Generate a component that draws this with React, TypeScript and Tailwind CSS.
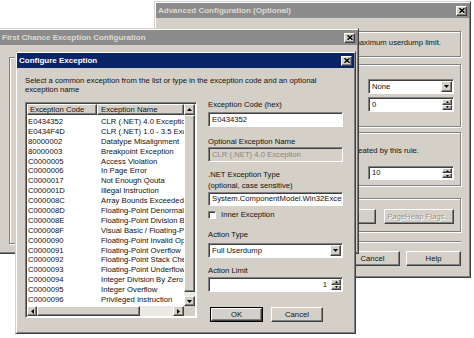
import React from "react";

// classic 3D borders
const frame =
  "border border-t-[#d4d0c8] border-l-[#d4d0c8] border-r-[#404040] border-b-[#404040] p-[1px] shadow-[inset_1px_1px_0_#fff,inset_-1px_-1px_0_#808080]";
const raised =
  "border border-t-white border-l-white border-r-[#404040] border-b-[#404040] shadow-[inset_-1px_-1px_0_#808080]";
const sunken =
  "border border-t-[#808080] border-l-[#808080] border-r-white border-b-white shadow-[inset_1px_1px_0_#404040]";
const etched = "border border-[#808080] shadow-[inset_1px_1px_0_#fff,1px_1px_0_#fff]";

const rows: [string, string][] = [
  ["E0434352", "CLR (.NET) 4.0 Exception"],
  ["E0434F4D", "CLR (.NET) 1.0 - 3.5 Exception"],
  ["80000002", "Datatype Misalignment"],
  ["80000003", "Breakpoint Exception"],
  ["C0000005", "Access Violation"],
  ["C0000006", "In Page Error"],
  ["C0000017", "Not Enough Qouta"],
  ["C000001D", "Illegal Instruction"],
  ["C000008C", "Array Bounds Exceeded"],
  ["C000008D", "Floating-Point Denormal Operand"],
  ["C000008E", "Floating-Point Division By Zero"],
  ["C000008F", "Visual Basic / Floating-Point Inexact Result"],
  ["C0000090", "Floating-Point Invalid Operation"],
  ["C0000091", "Floating-Point Overflow"],
  ["C0000092", "Floating-Point Stack Check"],
  ["C0000093", "Floating-Point Underflow"],
  ["C0000094", "Integer Division By Zero"],
  ["C0000095", "Integer Overflow"],
  ["C0000096", "Privileged Instruction"],
  ["C00000FD", "Stack Overflow"],
];

function XIcon() {
  return (
    <svg width="6" height="5" viewBox="0 0 6 5" className="block">
      <path d="M0.5 0.3 L5.5 4.7 M5.5 0.3 L0.5 4.7" stroke="#000" strokeWidth="1.5" />
    </svg>
  );
}

function Tri({ dir }: { dir: "up" | "down" | "left" | "right" }) {
  const d =
    dir === "up" ? "M0 3 L2.5 0 L5 3 Z" : dir === "down" ? "M0 0 L5 0 L2.5 3 Z" : dir === "left" ? "M3 0 L3 5 L0 2.5 Z" : "M0 0 L0 5 L3 2.5 Z";
  const w = dir === "up" || dir === "down" ? 5 : 3;
  const h = dir === "up" || dir === "down" ? 3 : 5;
  return (
    <svg width={w} height={h} viewBox={`0 0 ${w} ${h}`} className="block">
      <path d={d} fill="#000" />
    </svg>
  );
}

function CloseBtn() {
  return (
    <div className={`flex h-[10px] w-[11px] items-center justify-center bg-[#d4d0c8] ${raised}`}>
      <XIcon />
    </div>
  );
}

function TitleBar({ title, active }: { title: string; active?: boolean }) {
  return (
    <div
      className={`flex h-[15px] shrink-0 items-center justify-between pl-[2px] pr-[2px] ${
        active ? "bg-[#0a246a] text-white" : "bg-[#8c8c8c] text-[#dcd9d2]"
      }`}
    >
      <span className="whitespace-nowrap text-[8px] font-bold leading-none">{title}</span>
      <CloseBtn />
    </div>
  );
}

function Button({ label, isDefault, disabled, className }: { label: string; isDefault?: boolean; disabled?: boolean; className?: string }) {
  return (
    <div className={`${isDefault ? "border border-black" : ""} ${className ?? ""}`}>
      <div
        className={`flex h-full w-full items-center justify-center whitespace-nowrap bg-[#d4d0c8] ${raised} ${
          disabled ? "text-[#9a968e] [text-shadow:1px_1px_0_#fff]" : ""
        }`}
      >
        {label}
      </div>
    </div>
  );
}

function Field({ children, disabled, className }: { children: React.ReactNode; disabled?: boolean; className?: string }) {
  return (
    <div
      className={`flex items-center overflow-hidden whitespace-nowrap p-[1px] pl-[3px] ${sunken} ${
        disabled ? "bg-[#d4d0c8] text-[#8a8780]" : "bg-white"
      } ${className ?? ""}`}
    >
      {children}
    </div>
  );
}

function DropDown({ value, className }: { value: string; className?: string }) {
  return (
    <div className={`flex bg-white p-[1px] ${sunken} ${className ?? ""}`}>
      <span className="flex flex-1 items-center pl-[2px]">{value}</span>
      <div className={`flex w-[11px] items-center justify-center bg-[#d4d0c8] ${raised}`}>
        <Tri dir="down" />
      </div>
    </div>
  );
}

function SpinBox({ value, right, className }: { value: string; right?: boolean; className?: string }) {
  return (
    <div className={`flex bg-white p-[1px] ${sunken} ${className ?? ""}`}>
      <span className={`flex flex-1 items-center pl-[2px] pr-[4px] ${right ? "justify-end" : ""}`}>{value}</span>
      <div className="flex w-[10px] flex-col">
        <div className={`flex flex-1 items-center justify-center bg-[#d4d0c8] ${raised}`}>
          <svg width="3" height="2" viewBox="0 0 3 2" className="block">
            <path d="M0 2 L1.5 0 L3 2 Z" fill="#000" />
          </svg>
        </div>
        <div className={`flex flex-1 items-center justify-center bg-[#d4d0c8] ${raised}`}>
          <svg width="3" height="2" viewBox="0 0 3 2" className="block">
            <path d="M0 0 L3 0 L1.5 2 Z" fill="#000" />
          </svg>
        </div>
      </div>
    </div>
  );
}

function GroupBox({ legend, className, children }: { legend: string; className?: string; children?: React.ReactNode }) {
  return (
    <fieldset className={`${etched} min-w-0 px-[6px] ${className ?? ""}`}>
      <legend className="ml-[5px] px-[2px] leading-[10px]">{legend}</legend>
      {children}
    </fieldset>
  );
}

function AdvancedWindow() {
  return (
    <div className={`absolute left-[154px] top-[1px] flex h-[277px] w-[317px] flex-col bg-[#d4d0c8] ${frame}`}>
      <TitleBar title="Advanced Configuration (Optional)" />
      <div className="flex flex-col pl-[6px] pr-[8px]">
        <GroupBox legend="Exceptions" className="mt-[8px] h-[31px]">
          <div className="flex justify-end overflow-hidden pr-[13px] pt-[2px]">
            <span className="shrink-0 whitespace-nowrap">Userdumps are created for each exception until the maximum userdump limit.</span>
          </div>
        </GroupBox>
        <GroupBox legend="Unconfigured First Chance Exceptions" className="mt-[2px] h-[68px]">
          <div className="flex flex-col items-end">
            <DropDown value="None" className="mt-[10px] h-[15px] w-[86px]" />
            <SpinBox value="0" className="mt-[3px] h-[15px] w-[86px]" />
          </div>
        </GroupBox>
        <GroupBox legend="Maximum Userdumps" className="h-[59px]">
          <div className="flex justify-end overflow-hidden pr-[35px] pt-[9px]">
            <span className="shrink-0 whitespace-nowrap">Maximum number of userdumps created by this rule.</span>
          </div>
          <div className="flex justify-end">
            <SpinBox value="10" className="mt-[10px] h-[14px] w-[86px]" />
          </div>
        </GroupBox>
        <GroupBox legend="Userdump Settings" className="mt-[7px] h-[39px]">
          <div className="mt-[6px] flex justify-end gap-[8px]">
            <Button label="Userdump Options..." className="h-[15px] w-[130px]" />
            <Button label="PageHeap Flags..." disabled className="h-[15px] w-[70px]" />
          </div>
        </GroupBox>
        <div className="mt-[9px] h-[2px] border-b border-t border-[#808080] border-b-white" />
        <div className="mt-[8px] flex justify-end gap-[6px]">
          <Button label="OK" className="h-[15px] w-[55px]" />
          <Button label="Cancel" className="h-[15px] w-[55px]" />
          <Button label="Help" className="h-[15px] w-[55px]" />
        </div>
      </div>
    </div>
  );
}

function FirstChanceWindow() {
  return (
    <div className={`absolute left-[-2px] top-[28px] flex h-[226px] w-[361px] flex-col bg-[#d4d0c8] ${frame}`}>
      <TitleBar title="First Chance Exception Configuration" />
      <div className="flex flex-1 pb-[8px] pl-[9px] pt-[12px]">
        <div className={`w-[80px] ${etched}`} />
      </div>
    </div>
  );
}

function ExceptionList() {
  return (
    <div className={`mt-[2px] flex h-[216px] w-[172px] shrink-0 flex-col bg-white p-[1px] ${sunken}`}>
      <div className="flex min-h-0 flex-1">
        <div className="flex min-w-0 flex-1 flex-col overflow-hidden">
          <div className="flex h-[11px] shrink-0 whitespace-nowrap leading-[9px]">
            <div className={`flex w-[70px] items-center bg-[#d4d0c8] pl-[2px] ${raised}`}>Exception Code</div>
            <div className={`flex flex-1 items-center bg-[#d4d0c8] pl-[3px] ${raised}`}>Exception Name</div>
          </div>
          <div className="flex flex-col pt-[2px]">
            {rows.map(([code, name]) => (
              <div key={code} className="flex h-[9.9px] shrink-0 items-center whitespace-nowrap leading-[9.9px]">
                <span className="w-[70px] shrink-0 pl-[1px]">{code}</span>
                <span className="pl-[4px]">{name}</span>
              </div>
            ))}
          </div>
        </div>
        <div className="flex w-[11px] shrink-0 flex-col">
          <div className={`flex h-[11px] items-center justify-center bg-[#d4d0c8] ${raised}`}>
            <Tri dir="up" />
          </div>
          <div className={`h-[177px] bg-[#d4d0c8] ${raised}`} />
          <div className="flex-1 bg-[#ebe9e4]" />
          <div className={`flex h-[10px] items-center justify-center bg-[#d4d0c8] ${raised}`}>
            <Tri dir="down" />
          </div>
        </div>
      </div>
      <div className="flex h-[10px] shrink-0">
        <div className={`flex w-[10px] items-center justify-center bg-[#d4d0c8] ${raised}`}>
          <Tri dir="left" />
        </div>
        <div className={`w-[103px] bg-[#d4d0c8] ${raised}`} />
        <div className="flex-1 bg-[#ebe9e4]" />
        <div className={`flex w-[11px] items-center justify-center bg-[#d4d0c8] ${raised}`}>
          <Tri dir="right" />
        </div>
        <div className="w-[11px] bg-[#d4d0c8]" />
      </div>
    </div>
  );
}

function ConfigureWindow() {
  return (
    <div className={`absolute left-[15px] top-[51px] flex h-[283px] w-[341px] flex-col bg-[#d4d0c8] ${frame}`}>
      <TitleBar title="Configure Exception" active />
      <div className="flex flex-col pl-[8px] pt-[8px]">
        <p className="whitespace-nowrap leading-[9px]">
          Select a common exception from the list or type in the exception code and an optional
          <br />
          exception name
        </p>
        <div className="mt-[6px] flex">
          <ExceptionList />
          <div className="ml-[11px] flex w-[135px] flex-col">
            <span className="h-[10px] leading-[10px]">Exception Code (hex)</span>
            <Field className="mt-[2px] h-[15px]">E0434352</Field>
            <span className="mt-[10px] h-[10px] leading-[10px]">Optional Exception Name</span>
            <Field disabled className="h-[15px]">
              CLR (.NET) 4.0 Exception
            </Field>
            <p className="mt-[7px] leading-[11px]">
              .NET Exception Type
              <br />
              (optional, case sensitive)
            </p>
            <Field className="mt-[1px] h-[14px]">System.ComponentModel.Win32Exception</Field>
            <div className="mt-[4px] flex h-[10px] items-center gap-[5px]">
              <span className={`h-[8px] w-[8px] bg-white ${sunken}`} />
              <span>Inner Exception</span>
            </div>
            <span className="mt-[10px] h-[10px] leading-[10px]">Action Type</span>
            <DropDown value="Full Userdump" className="mt-[3px] h-[15px]" />
            <span className="mt-[8px] h-[10px] leading-[10px]">Action Limit</span>
            <SpinBox value="1" right className="mt-[1px] h-[15px]" />
            <div className="ml-[2px] mt-[15px] flex gap-[8px]">
              <Button label="OK" isDefault className="h-[15px] w-[53px]" />
              <Button label="Cancel" className="h-[15px] w-[52px]" />
            </div>
          </div>
        </div>
      </div>
    </div>
  );
}

export default function App() {
  return (
    <div className="relative h-[338px] w-[474px] overflow-hidden bg-white font-['Liberation_Sans',Arial,sans-serif] text-[7.7px] leading-[10px] text-[#111]">
      <AdvancedWindow />
      <FirstChanceWindow />
      <ConfigureWindow />
    </div>
  );
}
